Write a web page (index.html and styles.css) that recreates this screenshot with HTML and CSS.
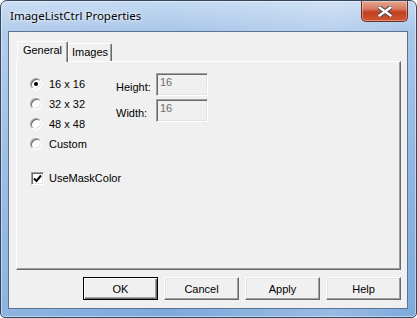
FILE: index.html
```html
<!DOCTYPE html>
<html lang="en">
<head>
    <meta charset="UTF-8">
    <title>ImageListCtrl Properties</title>
    <link rel="stylesheet" href="styles.css">
</head>
<body>
    <div class="window">
        <div class="titlebar">
            <span class="title">ImageListCtrl Properties</span>
            <div class="close">
                <svg width="14" height="11" viewBox="0 0 14 11">
                    <path d="M1.5 1.5 L12.5 9.5 M12.5 1.5 L1.5 9.5" stroke="#3c3c4a" stroke-width="4.2" stroke-linecap="round"/>
                    <path d="M1.5 1.5 L12.5 9.5 M12.5 1.5 L1.5 9.5" stroke="#fff" stroke-width="2.6" stroke-linecap="round"/>
                </svg>
            </div>
        </div>
        <div class="client">
            <div class="tabs">
                <div class="tab active">General</div>
                <div class="tab">Images</div>
            </div>
            <div class="panel">
                <div class="top-row">
                    <div class="radios">
                        <div class="option"><span class="radio checked"></span>16 x 16</div>
                        <div class="option"><span class="radio"></span>32 x 32</div>
                        <div class="option"><span class="radio"></span>48 x 48</div>
                        <div class="option"><span class="radio"></span>Custom</div>
                    </div>
                    <div class="fields">
                        <div class="field"><span class="field-label">Height:</span><span class="edit">16</span></div>
                        <div class="field"><span class="field-label">Width:</span><span class="edit">16</span></div>
                    </div>
                </div>
                <div class="option check-row">
                    <span class="checkbox">
                        <svg width="9" height="9" viewBox="0 0 9 9">
                            <path d="M1 4.5 L3.5 7 L8 1.5" stroke="#000" stroke-width="2" fill="none"/>
                        </svg>
                    </span>UseMaskColor
                </div>
            </div>
            <div class="buttons">
                <div class="btn default">OK</div>
                <div class="btn">Cancel</div>
                <div class="btn">Apply</div>
                <div class="btn">Help</div>
            </div>
        </div>
    </div>
</body>
</html>
```

FILE: styles.css
```css
body {
    margin: 0;
    background: #fff;
    font-family: "Liberation Sans", Arial, sans-serif;
    font-size: 11px;
    color: #000;
}
.window {
    width: 417px;
    height: 318px;
    box-sizing: border-box;
    border: 1px solid #34465e;
    border-radius: 7px 7px 5px 5px;
    background: linear-gradient(to right, rgba(255,255,255,0.12), rgba(255,255,255,0) 40%, rgba(255,255,255,0.2) 80%, rgba(255,255,255,0)),
                linear-gradient(to bottom, #c4daf2, #a9c6e8 30px, #8cb3e0 60%, #7ea9dc);
    box-shadow: inset 0 0 0 1px rgba(255,255,255,0.45);
    display: flex;
    flex-direction: column;
}
.titlebar {
    height: 30px;
    display: flex;
    align-items: flex-start;
    justify-content: space-between;
}
.title {
    font-family: "Noto Sans", sans-serif;
    font-size: 11.5px;
    margin: 7px 0 0 9px;
    text-shadow: 0 0 6px rgba(255,255,255,0.9), 0 0 3px rgba(255,255,255,0.8);
}
.close {
    width: 45px;
    height: 20px;
    margin: 0 8px 0 0;
    border: 1px solid #6b2f28;
    border-top: none;
    border-radius: 0 0 5px 5px;
    background: linear-gradient(to bottom, #e6a893, #d67a62 40%, #c2401f 55%, #cf5432);
    box-shadow: inset 0 0 0 1px rgba(255,255,255,0.35);
    display: flex;
    align-items: center;
    justify-content: center;
}
.client {
    flex: 1;
    margin: 0 8px 8px 7px;
    border: 1px solid #5a7394;
    background: #f0f0f0;
    padding: 9px 6px 8px 7px;
    display: flex;
    flex-direction: column;
}
.tabs {
    display: flex;
    align-items: flex-end;
    height: 20px;
    position: relative;
    z-index: 1;
}
.tab {
    box-sizing: border-box;
    height: 18px;
    width: 44px;
    padding-top: 2px;
    text-align: center;
    border-top: 1px solid #fff;
    border-left: 1px solid #fff;
    border-right: 1px solid #696969;
    box-shadow: inset -1px 0 0 #a0a0a0;
    border-radius: 2px 2px 0 0;
    background: #f0f0f0;
}
.tab.active {
    height: 21px;
    width: 51px;
    margin-left: 1px;
    margin-bottom: -1px;
    padding-top: 2px;
}
.panel {
    height: 209px;
    box-sizing: border-box;
    border-top: 1px solid #fff;
    border-left: 1px solid #fff;
    border-right: 1px solid #696969;
    border-bottom: 1px solid #696969;
    box-shadow: inset -1px -1px 0 #a0a0a0;
    padding: 12px 0 0 13px;
}
.top-row {
    display: flex;
}
.radios {
    width: 86px;
}
.option {
    height: 20px;
    display: flex;
    align-items: center;
}
.radio {
    width: 12px;
    height: 12px;
    box-sizing: border-box;
    border-radius: 50%;
    background: #fff;
    border: 1px solid;
    border-color: #a0a0a0 #fff #fff #a0a0a0;
    box-shadow: inset 1px 1px 0 #696969, inset -1px -1px 0 #e3e3e3;
    margin-right: 7px;
    display: flex;
    align-items: center;
    justify-content: center;
}
.radio.checked::after {
    content: "";
    width: 4px;
    height: 4px;
    border-radius: 50%;
    background: #000;
}
.field {
    display: flex;
    align-items: center;
    height: 27px;
    margin-top: -1px;
}
.field-label {
    width: 40px;
}
.edit {
    box-sizing: border-box;
    width: 52px;
    height: 23px;
    border: 1px solid;
    border-color: #a0a0a0 #fff #fff #a0a0a0;
    box-shadow: inset 1px 1px 0 #696969, inset -1px -1px 0 #e3e3e3;
    padding: 2px 0 0 3px;
    color: #6d6d6d;
    background: #f0f0f0;
    align-self: flex-start;
}
.check-row {
    margin-top: 14px;
}
.checkbox {
    width: 13px;
    height: 13px;
    box-sizing: border-box;
    background: #fff;
    border: 1px solid;
    border-color: #a0a0a0 #fff #fff #a0a0a0;
    box-shadow: inset 1px 1px 0 #696969, inset -1px -1px 0 #e3e3e3;
    margin: 0 5px 0 1px;
    display: flex;
    align-items: center;
    justify-content: center;
}
.buttons {
    display: flex;
    justify-content: flex-end;
    gap: 6px;
    margin-top: 7px;
}
.btn {
    box-sizing: border-box;
    width: 75px;
    height: 23px;
    border: 1px solid;
    border-color: #fff #696969 #696969 #fff;
    box-shadow: inset -1px -1px 0 #a0a0a0, inset 1px 1px 0 #e3e3e3;
    display: flex;
    align-items: center;
    justify-content: center;
    background: #f0f0f0;
}
.btn.default {
    border-color: #000;
    box-shadow: inset 1px 1px 0 #fff, inset -1px -1px 0 #696969, inset -2px -2px 0 #a0a0a0;
}
```
